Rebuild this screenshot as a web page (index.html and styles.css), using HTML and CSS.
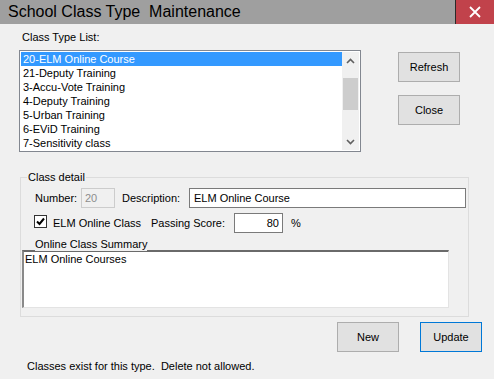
FILE: index.html
```html
<!DOCTYPE html>
<html lang="en">
<head>
    <meta charset="UTF-8">
    <meta name="viewport" content="width=device-width, initial-scale=1.0">
    <title>School Class Type Maintenance</title>
    <link rel="stylesheet" href="styles.css">
</head>
<body>

<div class="window">
    <!-- Title bar -->
    <div class="titlebar">
        <span class="title">School Class Type&nbsp; Maintenance</span>
        <span class="close-box">
            <svg width="14" height="14" viewBox="0 0 14 14">
                <path d="M2 2 L12 12 M12 2 L2 12" stroke="#fff" stroke-width="1.8" fill="none"/>
            </svg>
        </span>
    </div>

    <div class="client">
        <div class="top-row">
            <div class="list-col">
                <div class="caption">Class Type List:</div>
                <div class="listbox">
                    <ul class="items">
                        <li class="selected">20-ELM Online Course</li>
                        <li>21-Deputy Training</li>
                        <li>3-Accu-Vote Training</li>
                        <li>4-Deputy Training</li>
                        <li>5-Urban Training</li>
                        <li>6-EViD Training</li>
                        <li>7-Sensitivity class</li>
                    </ul>
                    <div class="vscroll">
                        <div class="arrow">
                            <svg width="9" height="6" viewBox="0 0 9 6"><path d="M1 5 L4.5 1.5 L8 5" stroke="#606060" stroke-width="1.6" fill="none"/></svg>
                        </div>
                        <div class="track"><div class="thumb"></div></div>
                        <div class="arrow">
                            <svg width="9" height="6" viewBox="0 0 9 6"><path d="M1 1 L4.5 4.5 L8 1" stroke="#606060" stroke-width="1.6" fill="none"/></svg>
                        </div>
                    </div>
                </div>
            </div>
            <div class="side-buttons">
                <button class="btn">Refresh</button>
                <button class="btn">Close</button>
            </div>
        </div>

        <fieldset class="group">
            <legend>Class detail</legend>
            <div class="row">
                <span class="lbl lbl-number">Number:</span>
                <input class="txt txt-number" type="text" value="20" disabled>
                <span class="lbl lbl-desc">Description:</span>
                <input class="txt txt-desc" type="text" value="ELM Online Course">
            </div>
            <div class="row row-second">
                <span class="check">
                    <svg width="11" height="11" viewBox="0 0 11 11"><path d="M2 5.5 L4.5 8 L9 2.5" stroke="#000" stroke-width="2" fill="none"/></svg>
                </span>
                <span class="lbl lbl-check">ELM Online Class</span>
                <span class="lbl lbl-score">Passing Score:</span>
                <input class="txt txt-score" type="text" value="80">
                <span class="lbl lbl-pct">%</span>
            </div>
            <div class="summary-label">Online Class Summary</div>
            <div class="summary">ELM Online Courses</div>
        </fieldset>

        <div class="bottom-buttons">
            <button class="btn btn-new">New</button>
            <button class="btn btn-update">Update</button>
        </div>

        <div class="status">Classes exist for this type.&nbsp; Delete not allowed.</div>
    </div>
</div>

</body>
</html>
```

FILE: styles.css
```css
/* Whole dialog */
body {
    margin: 0;
    background-color: #f0f0f0;
    font-family: "Liberation Sans", Arial, sans-serif;
    font-size: 11px;
    color: #000;
}
.window {
    width: 494px;
    height: 379px;
    overflow: hidden;
    background-color: #f0f0f0;
}

/* Title bar */
.titlebar {
    display: flex;
    height: 24px;
    background-color: #9f9f9f;
}
.title {
    flex: 1;
    padding-left: 8px;
    font-size: 16px;
    line-height: 23px;
    white-space: nowrap;
}
.close-box {
    display: flex;
    align-items: center;
    justify-content: center;
    width: 38px;
    border-left: 1px solid #2a2a2a;
    background-color: #c1424b;
}

.client {
    padding: 7px 0 0 20px;
}

/* List and side buttons */
.top-row {
    display: flex;
}
.list-col {
    width: 341px;
}
.caption {
    line-height: 13px;
    margin-left: 2px;
}
.listbox {
    display: flex;
    width: 342px;
    height: 102px;
    margin: 6px 0 0 -1px;
    padding: 1px;
    box-sizing: border-box;
    border: 1px solid #828790;
    background-color: white;
}
.items {
    list-style: none;
    margin: 0;
    padding: 0;
    width: 321px;
}
.items li {
    height: 14px;
    line-height: 14px;
    padding-left: 2px;
    white-space: nowrap;
}
.items li.selected {
    background-color: #3399ff;
    color: white;
}
.vscroll {
    display: flex;
    flex-direction: column;
    width: 17px;
    background-color: #f0f0f0;
}
.arrow {
    display: flex;
    align-items: center;
    justify-content: center;
    height: 17px;
}
.track {
    flex: 1;
    padding: 9px 1px 0 1px;
}
.thumb {
    height: 32px;
    background-color: #cdcdcd;
}

.side-buttons {
    display: flex;
    flex-direction: column;
    gap: 13px;
    margin: 21px 0 0 37px;
}
.btn {
    width: 62px;
    height: 30px;
    padding: 0;
    border: 1px solid #adadad;
    background-color: #e1e1e1;
    font-family: inherit;
    font-size: 11px;
    color: #000;
}
.btn-update {
    border-color: #0078d7;
}

/* Class detail group */
.group {
    width: 449px;
    box-sizing: border-box;
    margin: 18px 0 0 0;
    padding: 4px 0 8px 14px;
    border: 1px solid #dcdcdc;
}
.group legend {
    padding: 0 1px;
    margin-left: -8px;
    line-height: 14px;
}
.row {
    display: flex;
    align-items: center;
    height: 20px;
}
.row-second {
    margin-top: 5px;
}
.lbl {
    line-height: 13px;
    white-space: nowrap;
}
.lbl-number { width: 46px; }
.lbl-desc { width: 67px; margin-left: 7px; }
.lbl-check { width: 98px; margin-left: 6px; }
.lbl-score { width: 83px; }
.lbl-pct { margin-left: 8px; }

.txt {
    height: 20px;
    box-sizing: border-box;
    margin: 0;
    padding: 0 3px;
    border: 1px solid #7a7a7a;
    background-color: white;
    font-family: inherit;
    font-size: 11px;
    color: #000;
    outline: none;
}
.txt-number {
    width: 34px;
    border-color: #cccccc;
    background-color: #f0f0f0;
    color: #8d8d8d;
}
.txt-desc { width: 277px; padding-left: 4px; }
.txt-score { width: 49px; text-align: right; }

.check {
    display: flex;
    align-items: center;
    justify-content: center;
    width: 13px;
    height: 13px;
    box-sizing: border-box;
    margin: -3px 0 0 -1px;
    border: 1px solid #333;
    background-color: white;
}

.summary-label {
    position: relative;
    width: 112px;
    margin: 5px 0 -1px 0;
    line-height: 13px;
    white-space: nowrap;
    background-color: #f0f0f0;
}
.summary {
    width: 427px;
    height: 58px;
    box-sizing: border-box;
    margin-left: -13px;
    padding: 1px 0 0 1px;
    border-top: 2px solid #6a6a6a;
    border-left: 2px solid #8a8a8a;
    border-right: 1px solid #e3e3e3;
    border-bottom: 1px solid #e3e3e3;
    background-color: white;
    line-height: 13px;
}

/* Bottom */
.bottom-buttons {
    display: flex;
    gap: 21px;
    margin: 5px 0 0 317px;
}
.status {
    margin: 8px 0 0 7px;
    line-height: 13px;
}
```
